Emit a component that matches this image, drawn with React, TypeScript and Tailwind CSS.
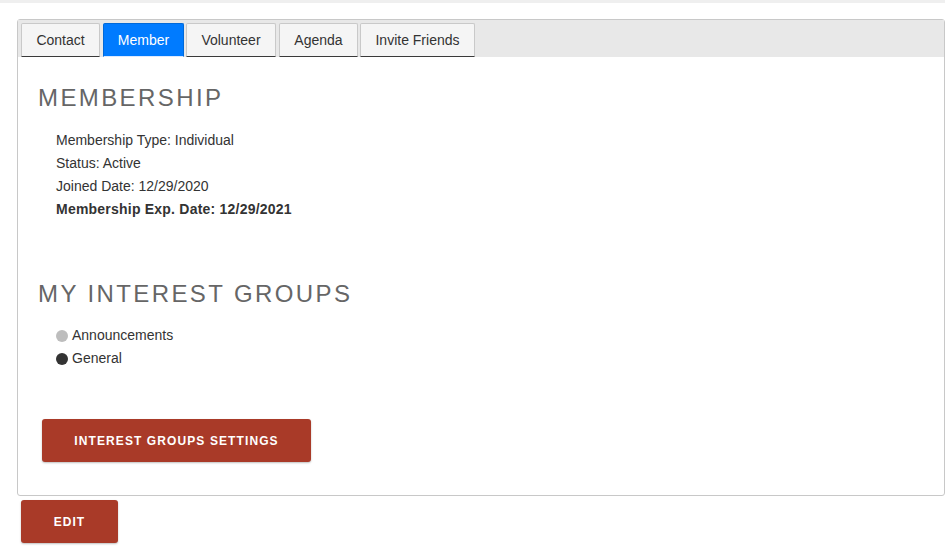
const tabs = [
  { label: "Contact", w: "w-[79px]", ml: "ml-0" },
  { label: "Member", w: "w-[81px]", ml: "ml-[3px]", active: true },
  { label: "Volunteer", w: "w-[90px]", ml: "ml-[2px]" },
  { label: "Agenda", w: "w-[79px]", ml: "ml-[3px]" },
  { label: "Invite Friends", w: "w-[115px]", ml: "ml-[2px]" },
];

export default function App() {
  return (
    <div className="min-h-screen bg-white font-['Liberation_Sans',Arial,sans-serif] text-[#333]">
      <div className="h-[3px] bg-[#efefef]" />
      <div className="pl-[17px] pt-[16px]">
        {/* tab panel */}
        <div className="w-[928px] rounded-[3px] border border-[#c8c8c8]">
          <div className="flex h-[37px] items-end bg-[#e8e8e8] px-[3px]">
            {tabs.map((t) => (
              <div
                key={t.label}
                className={
                  t.active
                    ? `${t.w} ${t.ml} flex h-[34px] items-center justify-center rounded-t-[2px] border border-[#0069d9] border-b-[#dbe9ff] bg-[#007bff] text-[14px] text-white`
                    : `${t.w} ${t.ml} flex h-[34px] items-center justify-center rounded-t-[2px] border border-[#c9c9c9] border-b-[#3a3a3a] bg-[#f5f5f5] text-[14px] text-[#333]`
                }
              >
                {t.label}
              </div>
            ))}
          </div>

          <div className="px-[20px] pt-[28px] pb-[33px]">
            <h2 className="text-[24px] leading-[26px] tracking-[0.1em] text-[#666]">MEMBERSHIP</h2>
            <ul className="mt-[18px] pl-[18px] text-[14px] leading-[23px]">
              <li>Membership Type: Individual</li>
              <li>Status: Active</li>
              <li>Joined Date: 12/29/2020</li>
              <li className="font-bold tracking-[0.22px]">Membership Exp. Date: 12/29/2021</li>
            </ul>

            <h2 className="mt-[60px] text-[24px] leading-[26px] tracking-[0.1em] text-[#666]">MY INTEREST GROUPS</h2>
            <ul className="mt-[17px] pl-[18px] text-[14px] leading-[23px]">
              <li className="flex items-center gap-[4px]">
                <span className="h-[12px] w-[12px] rounded-full bg-[#bdbdbd]" />
                Announcements
              </li>
              <li className="flex items-center gap-[4px]">
                <span className="h-[12px] w-[12px] rounded-full bg-[#333]" />
                General
              </li>
            </ul>

            <button className="ml-[4px] mt-[49px] h-[43px] w-[269px] rounded-[3px] bg-[#a93a28] text-[12px] font-bold tracking-[1.1px] text-white shadow-[0_1px_2px_rgba(0,0,0,0.25)]">
              INTEREST GROUPS SETTINGS
            </button>
          </div>
        </div>

        <button className="ml-[4px] mt-[4px] h-[43px] w-[97px] rounded-[3px] bg-[#a93a28] text-[12px] font-bold tracking-[1px] text-white shadow-[0_1px_2px_rgba(0,0,0,0.25)]">
          EDIT
        </button>
      </div>
    </div>
  );
}
